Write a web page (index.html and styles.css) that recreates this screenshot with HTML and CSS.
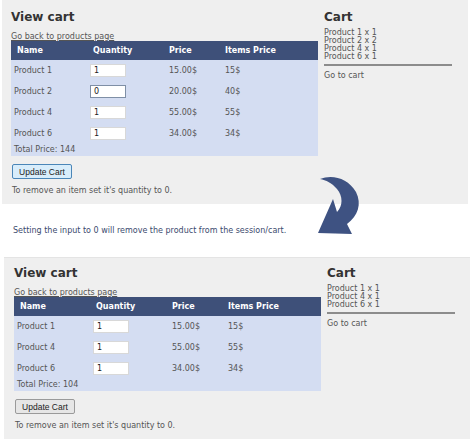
FILE: index.html
```html
<!DOCTYPE html>
<html lang="en">
<head>
    <meta charset="UTF-8">
    <title>View cart</title>
    <link rel="stylesheet" href="styles.css">
</head>
<body>
    <!-- before: cart with product 2 set to 0 -->
    <div class="panel panel-first">
        <div class="main">
            <h2>View cart</h2>
            <a class="back-link" href="#">Go back to products page</a>
            <table class="cart-table">
                <tr>
                    <th class="c-name">Name</th>
                    <th class="c-qty">Quantity</th>
                    <th class="c-price">Price</th>
                    <th class="c-total">Items Price</th>
                </tr>
                <tr><td>Product 1</td><td><input type="text" value="1"></td><td>15.00$</td><td>15$</td></tr>
                <tr><td>Product 2</td><td><input class="focused" type="text" value="0"></td><td>20.00$</td><td>40$</td></tr>
                <tr><td>Product 4</td><td><input type="text" value="1"></td><td>55.00$</td><td>55$</td></tr>
                <tr><td>Product 6</td><td><input type="text" value="1"></td><td>34.00$</td><td>34$</td></tr>
                <tr class="total-row"><td colspan="4">Total Price: 144</td></tr>
            </table>
            <button class="update-btn active">Update Cart</button>
            <p class="hint">To remove an item set it's quantity to 0.</p>
        </div>
        <div class="side">
            <h2>Cart</h2>
            <ul class="cart-list">
                <li>Product 1 x 1</li>
                <li>Product 2 x 2</li>
                <li>Product 4 x 1</li>
                <li>Product 6 x 1</li>
            </ul>
            <a class="cart-link" href="#">Go to cart</a>
        </div>
    </div>

    <div class="note">Setting the input to 0 will remove the product from the session/cart.</div>

    <!-- after: product 2 removed -->
    <div class="panel panel-second">
        <div class="main">
            <h2>View cart</h2>
            <a class="back-link" href="#">Go back to products page</a>
            <table class="cart-table">
                <tr>
                    <th class="c-name">Name</th>
                    <th class="c-qty">Quantity</th>
                    <th class="c-price">Price</th>
                    <th class="c-total">Items Price</th>
                </tr>
                <tr><td>Product 1</td><td><input type="text" value="1"></td><td>15.00$</td><td>15$</td></tr>
                <tr><td>Product 4</td><td><input type="text" value="1"></td><td>55.00$</td><td>55$</td></tr>
                <tr><td>Product 6</td><td><input type="text" value="1"></td><td>34.00$</td><td>34$</td></tr>
                <tr class="total-row"><td colspan="4">Total Price: 104</td></tr>
            </table>
            <button class="update-btn">Update Cart</button>
            <p class="hint">To remove an item set it's quantity to 0.</p>
        </div>
        <div class="side">
            <h2>Cart</h2>
            <ul class="cart-list">
                <li>Product 1 x 1</li>
                <li>Product 4 x 1</li>
                <li>Product 6 x 1</li>
            </ul>
            <a class="cart-link" href="#">Go to cart</a>
        </div>
    </div>

    <svg class="arrow" width="60" height="70" viewBox="0 0 60 70">
        <path d="M10 11 C 22 6, 38 10, 46 24 C 52 36, 48 48, 37 56 L 42 66 L 8 65 L 23 31 L 27 44 C 33 38, 33 28, 27 21 C 22 15, 16 12, 10 11 Z" fill="#3e5282"/>
    </svg>
</body>
</html>
```

FILE: styles.css
```css
body {
    margin: 0;
    background-color: #fff;
    font-family: "DejaVu Sans", Verdana, sans-serif;
    font-size: 8px;
    color: #555;
    position: relative;
    width: 474px;
    height: 447px;
    overflow: hidden;
}

.panel {
    display: flex;
    background-color: #efefef;
    width: 466px;
    box-sizing: border-box;
    padding-left: 10px;
}

.panel-first {
    margin-left: 2px;
    height: 204px;
    padding-top: 9px;
    padding-left: 9px;
}

.panel-second {
    margin-left: 4px;
    height: 182px;
    padding-top: 7px;
    border-top: 1px solid #e4e4e4;
}

.main {
    width: 307px;
}

.side {
    margin-left: 6px;
    width: 128px;
}

h2 {
    margin: 0;
    font-size: 12px;
    line-height: 16px;
    font-weight: bold;
    color: #333;
}

.back-link {
    display: block;
    margin-top: 7px;
    line-height: 9px;
    color: #555;
    text-decoration: underline;
}

.cart-table {
    width: 307px;
    border-collapse: collapse;
    table-layout: fixed;
    background-color: #d4ddf2;
}

.cart-table th {
    height: 19px;
    padding: 0 0 0 3px;
    background-color: #3e5079;
    color: #fff;
    font-weight: bold;
    text-align: left;
}

.cart-table .c-name { width: 70px; padding-left: 6px; }
.cart-table .c-qty { width: 73px; padding-left: 6px; }
.cart-table .c-price { width: 53px; }

.cart-table td {
    height: 21px;
    padding: 0 0 0 3px;
    vertical-align: middle;
}

.cart-table .total-row td {
    height: 12px;
    line-height: 10px;
    vertical-align: middle;
}

.cart-table input {
    width: 36px;
    height: 13px;
    box-sizing: border-box;
    border: 1px solid #d8d8d8;
    background-color: #fff;
    padding: 0 0 0 3px;
    font-family: "DejaVu Sans", Verdana, sans-serif;
    font-size: 8px;
    color: #222;
}

.cart-table input.focused {
    border-color: #7f8fa6;
}

.update-btn {
    display: block;
    margin: 8px 0 0 1px;
    width: 60px;
    height: 15px;
    padding: 0;
    font-family: "Liberation Sans", Arial, sans-serif;
    font-size: 8.5px;
    color: #222;
    background-color: #e6e6e6;
    border: 1px solid #9a9a9a;
    border-radius: 2px;
}

.update-btn.active {
    background-color: #d8edfb;
    border-color: #4a86b8;
}

.hint {
    margin: 7px 0 0 1px;
    line-height: 10px;
}

.cart-list {
    list-style: none;
    margin: 4px 0 0;
    padding: 0;
    font-size: 8px;
    line-height: 8px;
}

.cart-list li {
    white-space: nowrap;
}

.side .cart-list {
    padding-bottom: 3px;
    border-bottom: 2px solid #8c8c8c;
}

.cart-link {
    display: block;
    margin-top: 5px;
    line-height: 10px;
    color: #555;
    text-decoration: none;
}

.note {
    height: 53px;
    display: flex;
    align-items: center;
    padding-left: 13px;
    color: #3b4a6e;
}

.arrow {
    position: absolute;
    left: 310px;
    top: 168px;
}
```
